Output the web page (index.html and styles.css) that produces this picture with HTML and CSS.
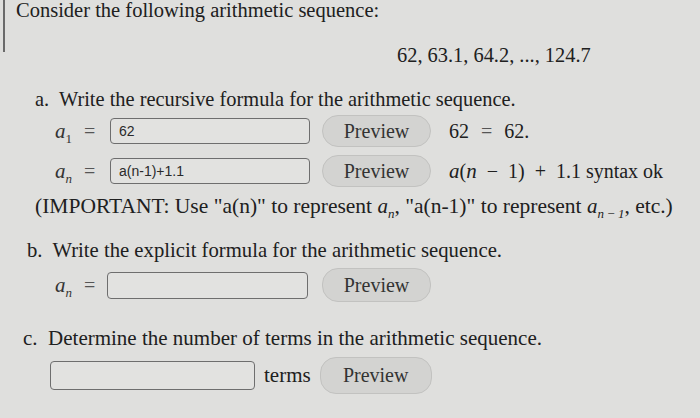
FILE: index.html
```html
<!DOCTYPE html>
<html>
<head>
<meta charset="utf-8">
<link rel="stylesheet" href="styles.css">
</head>
<body>
<div class="page">
  <div class="head">
    <p class="intro">Consider the following arithmetic sequence:</p>
  </div>
  <p class="seq">62, 63.1, 64.2, ..., 124.7</p>

  <p class="q qa">a.&nbsp; Write the recursive formula for the arithmetic sequence.</p>
  <div class="row r1">
    <span class="lbl"><i class="m">a</i><sub>1</sub><span class="eq">=</span></span>
    <span class="box">62</span>
    <span class="btn">Preview</span>
    <span class="res">62 <span class="eq">=</span> 62.</span>
  </div>
  <div class="row r2">
    <span class="lbl"><i class="m">a<sub>n</sub></i><span class="eq">=</span></span>
    <span class="box">a(n-1)+1.1</span>
    <span class="btn">Preview</span>
    <span class="res"><i class="m">a</i>(<i class="m">n</i><span class="op">&minus;</span>1)<span class="op">+</span>1.1 syntax ok</span>
  </div>
  <p class="note">(IMPORTANT: Use "a(n)" to represent <i class="m">a<sub>n</sub></i>, "a(n-1)" to represent <i class="m">a<sub>n&thinsp;&minus;&thinsp;1</sub></i>, etc.)</p>

  <p class="q qb">b.&nbsp; Write the explicit formula for the arithmetic sequence.</p>
  <div class="row r3">
    <span class="lbl lb"><i class="m">a<sub>n</sub></i><span class="eq">=</span></span>
    <span class="box bb"></span>
    <span class="btn bbtn">Preview</span>
  </div>

  <p class="q qc">c.&nbsp; Determine the number of terms in the arithmetic sequence.</p>
  <div class="row r4">
    <span class="box bc"></span>
    <span class="terms">terms</span>
    <span class="btn cbtn">Preview</span>
  </div>
</div>
</body>
</html>
```
FILE: styles.css
```css
html, body {
  margin: 0;
  padding: 0;
}
body {
  width: 700px;
  height: 418px;
  overflow: hidden;
  background: #dfdfdd;
  color: #202020;
  font-family: "Liberation Serif", "Times New Roman", serif;
  font-size: 20px;
}
p { margin: 0; }
.page {
  display: flex;
  flex-direction: column;
}
.head {
  margin-left: 3px;
  border-left: 2px solid #6a6a6a;
  height: 52px;
  padding-left: 11px;
}
.intro {
  font-size: 20.5px;
  line-height: 24px;
  margin-top: -2px;
}
.seq {
  padding-left: 397px;
  line-height: 24px;
  margin-top: -9px;
  font-size: 20.4px;
}
.q { line-height: 24px; }
.qa { padding-left: 35px; margin-top: 20px; font-size: 20.4px; }
.qb { padding-left: 27px; margin-top: 20px; font-size: 20.7px; }
.qc { padding-left: 23px; margin-top: 24px; font-size: 21px; }
.note { padding-left: 35px; margin-top: 6px; line-height: 24px; font-size: 21.5px; }

.m { font-style: italic; font-family: "Liberation Serif", serif; font-size: 21px; }
.note .m { font-size: 21px; }
sub { font-size: 13px; line-height: 0; font-style: italic; }
.lbl sub { font-style: normal; }
.lbl .m sub { font-style: italic; }
.eq { padding: 0 8px 0 12px; color: #555; }
.res .eq { padding: 0 7px; }
.op { padding: 0 10px; }

.row {
  display: flex;
  align-items: center;
  height: 34px;
}
.r1 { margin-top: 3px; }
.r2 { margin-top: 6px; }
.r3 { margin-top: 6px; }
.r4 { margin-top: 8px; padding-left: 50px; }

.lbl {
  box-sizing: border-box;
  width: 110px;
  padding-left: 55px;
  white-space: nowrap;
  color: #333;
}
.lb { width: 107px; }
.box {
  box-sizing: border-box;
  width: 200px;
  height: 26px;
  border: 1px solid #6e6e6e;
  border-radius: 4px;
  background: #e2e2e0;
  font-family: "Liberation Sans", Arial, sans-serif;
  font-size: 14px;
  line-height: 24px;
  padding-left: 8px;
  color: #2a2a2a;
}
.bb { width: 201px; height: 27px; }
.bc { width: 205px; height: 29px; }
.btn {
  box-sizing: border-box;
  margin-left: 12px;
  width: 109px;
  height: 32px;
  border-radius: 16px;
  background: #d3d3d1;
  border: 1px solid #c2c2c0;
  text-align: center;
  line-height: 30px;
  font-size: 20px;
  color: #333;
}
.bbtn { margin-left: 14px; height: 34px; line-height: 32px; }
.cbtn { margin-left: 9px; width: 112px; height: 37px; line-height: 35px; }
.res { margin-left: 18px; white-space: nowrap; }
.terms { margin-left: 9px; font-size: 21px; }
```
